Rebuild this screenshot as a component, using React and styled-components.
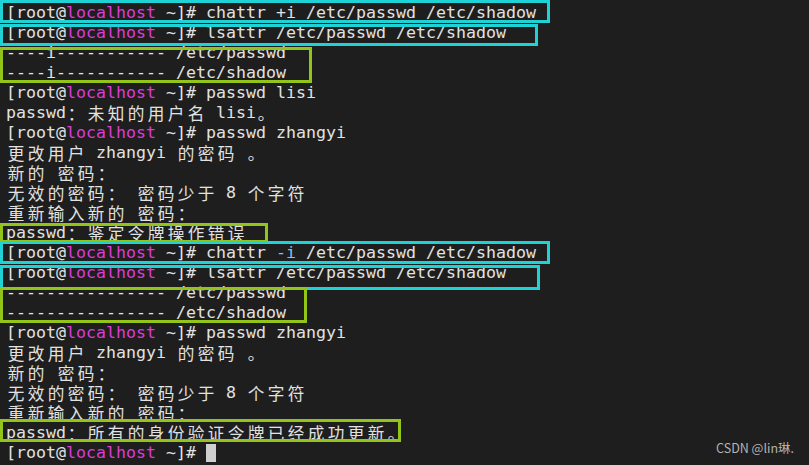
import React from "react";
import styled, { createGlobalStyle } from "styled-components";

const Global = createGlobalStyle`
  html, body { margin: 0; padding: 0; background: #1e1e1e; }
  #root { width: 809px; height: 465px; }
`;

const Screen = styled.div`
  position: relative;
  width: 809px;
  height: 465px;
  overflow: hidden;
  background: #1e1e1e;
`;

const Terminal = styled.div`
  display: flex;
  flex-direction: column;
  padding: 3px 0 0 6px;
  font-family: "DejaVu Sans Mono", monospace;
  font-size: 16.61px;
  color: #e2e2e2;
`;

const Line = styled.div`
  height: 20px;
  line-height: 20px;
  white-space: pre;
`;

const Host = styled.span`
  color: #d93cd9;
`;

const Flag = styled.span`
  color: #7fc4f2;
`;

const Wide = styled.span`
  display: inline-block;
  width: 20px;
  text-align: center;
  vertical-align: top;
  line-height: 20px;
  font-family: "Noto Sans CJK SC", sans-serif;
`;

const Cursor = styled.span`
  display: inline-block;
  width: 10px;
  height: 18px;
  margin-top: 1px;
  vertical-align: top;
  background: #cfcfcf;
`;

const Mark = styled.div`
  position: absolute;
  top: ${(p) => p.$top}px;
  left: 0;
  width: ${(p) => p.$w}px;
  height: ${(p) => p.$h}px;
  box-sizing: border-box;
  border: 3px solid ${(p) => (p.$kind === "cyan" ? "#1ed2d6" : "#93c41a")};
  pointer-events: none;
`;

const Watermark = styled.div`
  position: absolute;
  right: 15px;
  bottom: 10px;
  font-family: "Noto Sans CJK SC", "Liberation Sans", sans-serif;
  font-size: 12.5px;
  line-height: 14px;
  color: #b4b4b4;
`;

const WIDE_RE = /[\u3000-\u9fff\uff00-\uffef]/;

function Txt({ s }) {
  const out = [];
  let buf = "";
  [...s].forEach((ch, i) => {
    if (WIDE_RE.test(ch)) {
      if (buf) {
        out.push(buf);
        buf = "";
      }
      out.push(<Wide key={i}>{ch}</Wide>);
    } else {
      buf += ch;
    }
  });
  if (buf) out.push(buf);
  return <>{out}</>;
}

function Prompt() {
  return (
    <>
      [root@<Host>localhost</Host> ~]#{" "}
    </>
  );
}

const marks = [
  { kind: "cyan", top: 0, w: 550, h: 23 },
  { kind: "cyan", top: 24, w: 538, h: 22 },
  { kind: "green", top: 47, w: 312, h: 36 },
  { kind: "green", top: 223, w: 268, h: 20 },
  { kind: "cyan", top: 241, w: 550, h: 23 },
  { kind: "cyan", top: 265, w: 540, h: 25 },
  { kind: "green", top: 287, w: 307, h: 36 },
  { kind: "green", top: 419, w: 401, h: 23 },
];

export default function App() {
  return (
    <Screen>
      <Global />
      <Terminal>
        <Line><Prompt />chattr +i /etc/passwd /etc/shadow</Line>
        <Line><Prompt />lsattr /etc/passwd /etc/shadow</Line>
        <Line>----i----------- /etc/passwd</Line>
        <Line>----i----------- /etc/shadow</Line>
        <Line><Prompt />passwd lisi</Line>
        <Line><Txt s="passwd：未知的用户名 lisi。" /></Line>
        <Line><Prompt />passwd zhangyi</Line>
        <Line><Txt s="更改用户 zhangyi 的密码 。" /></Line>
        <Line><Txt s="新的 密码：" /></Line>
        <Line><Txt s="无效的密码： 密码少于 8 个字符" /></Line>
        <Line><Txt s="重新输入新的 密码：" /></Line>
        <Line><Txt s="passwd：鉴定令牌操作错误" /></Line>
        <Line><Prompt />chattr <Flag>-i</Flag> /etc/passwd /etc/shadow</Line>
        <Line><Prompt />lsattr /etc/passwd /etc/shadow</Line>
        <Line>---------------- /etc/passwd</Line>
        <Line>---------------- /etc/shadow</Line>
        <Line><Prompt />passwd zhangyi</Line>
        <Line><Txt s="更改用户 zhangyi 的密码 。" /></Line>
        <Line><Txt s="新的 密码：" /></Line>
        <Line><Txt s="无效的密码： 密码少于 8 个字符" /></Line>
        <Line><Txt s="重新输入新的 密码：" /></Line>
        <Line><Txt s="passwd：所有的身份验证令牌已经成功更新。" /></Line>
        <Line><Prompt /><Cursor /></Line>
      </Terminal>
      {marks.map((m, i) => (
        <Mark key={i} $kind={m.kind} $top={m.top} $w={m.w} $h={m.h} />
      ))}
      <Watermark>CSDN @lin琳.</Watermark>
    </Screen>
  );
}
